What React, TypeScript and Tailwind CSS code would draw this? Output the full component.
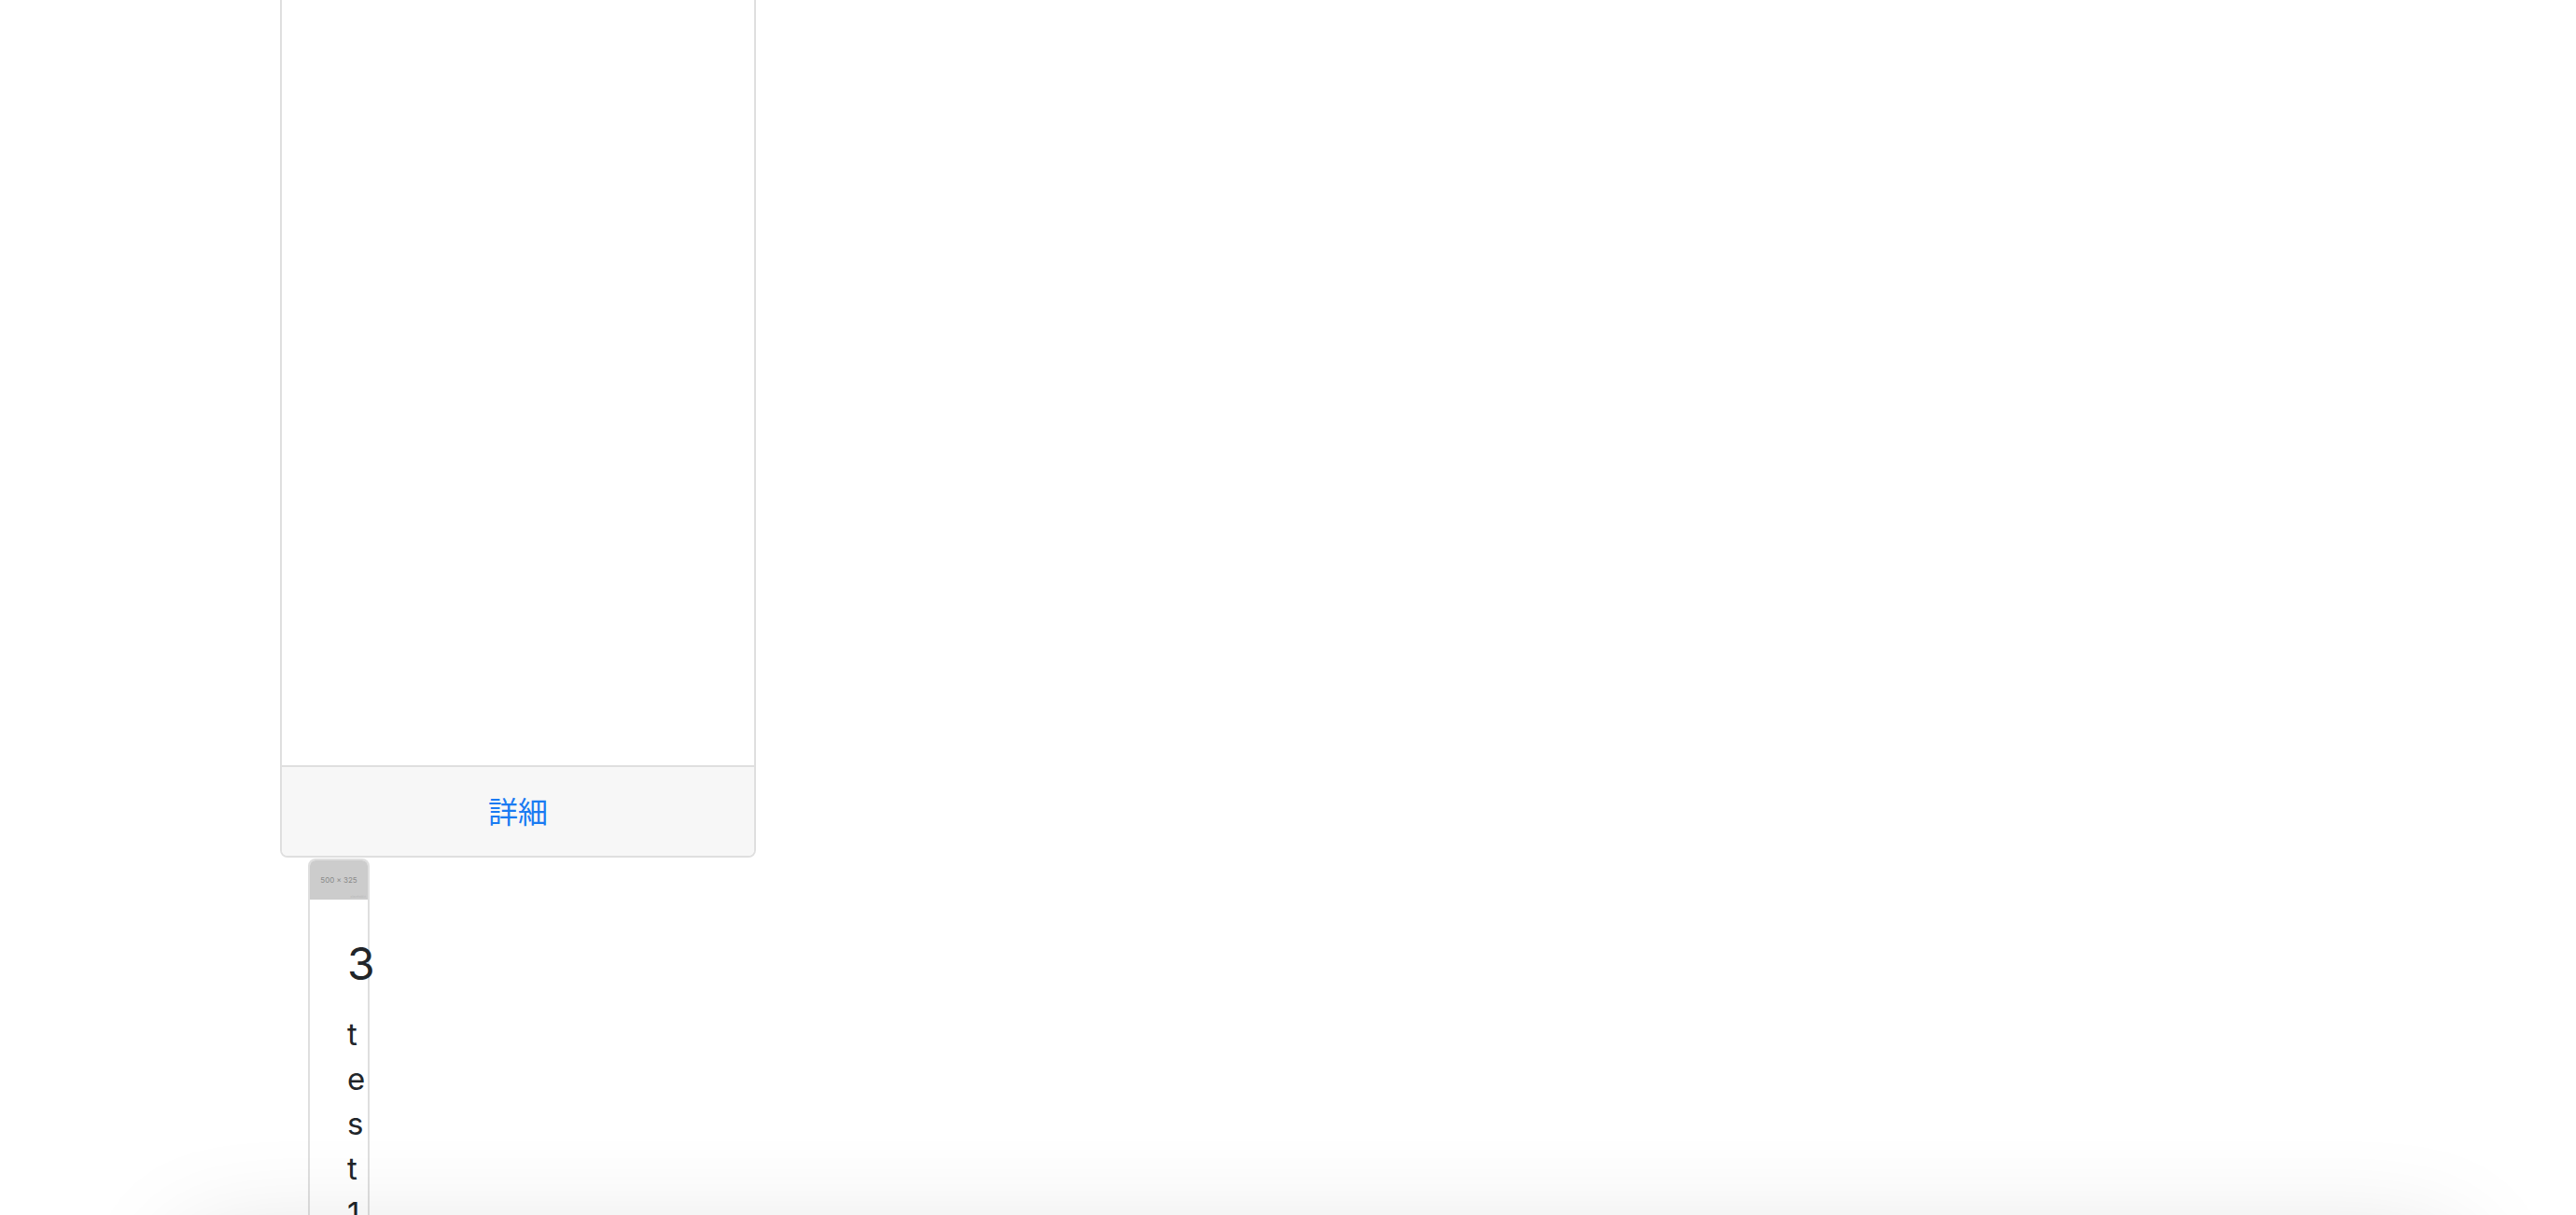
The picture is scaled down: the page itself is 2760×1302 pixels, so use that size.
import React from 'react';

const App: React.FC = () => {
  return (
    <div className="min-h-screen bg-white font-['Inter','Noto_Sans_CJK_JP',sans-serif] text-[#212529]">
      <div className="flex flex-col items-start pl-[300px]">
        {/* Card scrolled partly out of view */}
        <div className="-mt-[20px] flex w-[510px] flex-col rounded-[8px] border-2 border-[#dfdfdf] bg-white">
          <div className="h-[838px]" />
          <div className="rounded-b-[6px] border-t-2 border-[#dfdfdf] bg-[#f7f7f7] px-[40px] pt-[25px] pb-[23px] text-center text-[32px] leading-[47px]">
            <a className="text-[#1a7bf2]">詳細</a>
          </div>
        </div>

        {/* Narrow card */}
        <div className="ml-[30px] mt-px flex w-[66px] flex-col break-words rounded-[8px] border-2 border-[#dfdfdf] bg-white">
          <div className="relative flex h-[42px] items-center justify-center rounded-t-[6px] bg-[#cccccc]">
            <span className="text-[8px] leading-none text-[#8a8a8a]">500 x 325</span>
            <span className="absolute bottom-[1px] right-[2px] text-[3px] leading-none text-[#b8b8b8]">placehold.it</span>
          </div>
          <div className="p-[40px]">
            <h4 className="mb-[22px] text-[48px] font-normal leading-[57.6px]">3</h4>
            <p className="text-[33px] leading-[48px]">test1</p>
          </div>
        </div>
      </div>

      {/* bar below the fold, only its shadow shows */}
      <div className="fixed left-[200px] right-[130px] top-[1335px] h-[200px] bg-white shadow-[0_0_120px_rgba(0,0,0,0.15)]" />
    </div>
  );
};

export default App;
